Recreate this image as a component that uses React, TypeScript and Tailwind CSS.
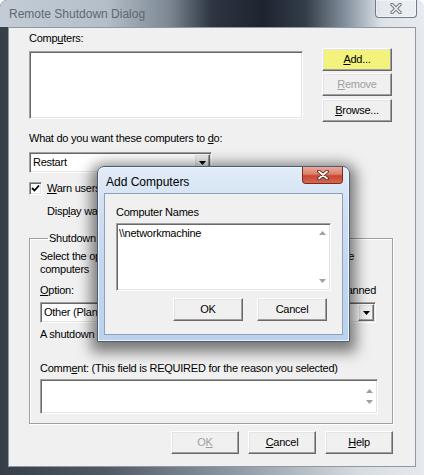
import React from "react";

const raised =
  "flex items-center justify-center border border-t-white border-l-white border-r-[#696969] border-b-[#696969] shadow-[inset_-1px_-1px_0_#a0a0a0,inset_1px_1px_0_#e3e3e3]";
const sunken =
  "border border-t-[#a0a0a0] border-l-[#a0a0a0] border-r-white border-b-white shadow-[inset_1px_1px_0_#696969,inset_-1px_-1px_0_#e3e3e3] bg-white";

function Arrow({ up, color = "#a0a0a0" }: { up?: boolean; color?: string }) {
  return (
    <svg width="7" height="4" viewBox="0 0 7 4">
      <path d={up ? "M0 4 L3.5 0 L7 4 Z" : "M0 0 L7 0 L3.5 4 Z"} fill={color} />
    </svg>
  );
}

function Combo({ value, className }: { value: string; className: string }) {
  return (
    <div className={`${sunken} flex items-stretch ${className}`}>
      <div className="flex flex-1 items-center pl-[3px] overflow-hidden whitespace-nowrap">{value}</div>
      <div className={`${raised} m-[1px] w-[16px] bg-[#f0f0f0]`}>
        <Arrow color="#000" />
      </div>
    </div>
  );
}

function Btn({
  children,
  className = "",
}: {
  children: React.ReactNode;
  className?: string;
}) {
  return <div className={`${raised} h-[23px] ${className}`}>{children}</div>;
}

function ScrollArrows({ className }: { className: string }) {
  return (
    <div className={`flex flex-col items-center justify-between ${className}`}>
      <Arrow up />
      <Arrow />
    </div>
  );
}

export default function App() {
  return (
    <div className="font-['Liberation_Sans',Arial,sans-serif] text-[11px] leading-[13px] tracking-[-0.25px] text-black">
      <div className="relative flex h-[475px] w-[424px] flex-col overflow-hidden rounded-t-[7px] bg-[linear-gradient(90deg,#363e47_0%,#515a64_25%,#8e98a3_55%,#d6dce2_85%,#e6eaee_100%)]">
        {/* title bar */}
        <div className="flex h-[27px] shrink-0 items-start justify-between bg-[linear-gradient(90deg,#c4cdd6_0%,#b4bec9_25%,#7c8793_40%,#2c3541_50%,#1c2430_62%,#333d49_72%,#8995a2_82%,#dde2e7_90%,#e8ecf0_100%)]">
          <div className="pl-[9px] pt-[7px] text-[12px] leading-[14px] tracking-normal text-[#5f6872]">
            Remote Shutdown Dialog
          </div>
          <div className="mr-[7px] flex h-[18px] w-[42px] items-center justify-center rounded-b-[4px] border border-t-0 border-[#727c88] bg-[#ffffff40] shadow-[inset_0_0_0_1px_#ffffff70]">
            <svg width="12" height="11" viewBox="0 0 12 11">
              <path d="M2 1.5 L10 9.5 M10 1.5 L2 9.5" stroke="#6a737e" strokeWidth="3.4" strokeLinecap="round" />
              <path d="M2 1.5 L10 9.5 M10 1.5 L2 9.5" stroke="#eef1f4" strokeWidth="1.6" strokeLinecap="round" />
            </svg>
          </div>
        </div>

        {/* client area */}
        <div className="mx-[8px] mb-[8px] flex flex-1 flex-col border border-[#8e99a5] bg-[#f0f0f0] pl-[20px]">
          <div className="mt-[4px]">
            Comp<span className="underline">u</span>ters:
          </div>
          <div className="mt-[3px] flex items-start">
            <div className={`${sunken} mt-[3px] h-[68px] w-[274px]`} />
            <div className="ml-[19px] flex w-[70px] flex-col">
              <Btn className="bg-[#f2f27c]">
                <span className="underline">A</span>dd...
              </Btn>
              <Btn className="mt-[2px] bg-[#f0f0f0] text-[#a0a0a0]">
                <span className="underline">R</span>emove
              </Btn>
              <Btn className="mt-[3px] bg-[#f0f0f0]">
                <span className="underline">B</span>rowse...
              </Btn>
            </div>
          </div>
          <div className="mt-[10px]">
            What do you want these computers to <span className="underline">d</span>o:
          </div>
          <Combo value="Restart" className="mt-[7px] h-[21px] w-[183px]" />
          <div className="mt-[9px] flex items-center">
            <div className={`${sunken} flex h-[13px] w-[13px] items-center justify-center`}>
              <svg width="9" height="9" viewBox="0 0 9 9">
                <path d="M1 4 L3.5 6.5 L8 1.5" stroke="#000" strokeWidth="1.8" fill="none" />
              </svg>
            </div>
            <div className="ml-[5px]">
              <span className="underline">W</span>arn users of the action
            </div>
          </div>
          <div className="ml-[18px] mt-[10px]">
            Disp<span className="underline">l</span>ay warning for 2 minutes
          </div>

          <fieldset className="mt-[14px] w-[364px] border border-[#a0a0a0] pb-[9px] pl-[10px] shadow-[1px_1px_0_#fff,inset_1px_1px_0_#fff]">
            <legend className="ml-[8px] px-[1px]">Shutdown Event Tracker</legend>
            <div className="mt-[5px]">
              Select the option that best describes why you want to shut down the
              <br />
              computers
            </div>
            <div className="mt-[8px] flex items-center justify-between pr-[16px]">
              <div>
                <span className="underline">O</span>ption:
              </div>
              <div className="flex items-center">
                <div className={`${sunken} h-[13px] w-[13px]`} />
                <div className="ml-[5px]">Planned</div>
              </div>
            </div>
            <Combo value="Other (Planned)" className="mt-[5px] h-[21px] w-[336px]" />
            <div className="mt-[5px]">A shutdown or restart for an unknown reason</div>
            <div className="mt-[21px]">
              Comm<span className="underline">e</span>nt: (This field is REQUIRED for the reason you selected)
            </div>
            <div className={`${sunken} mt-[4px] flex h-[35px] w-[338px] justify-end`}>
              <ScrollArrows className="w-[16px] py-[9px]" />
            </div>
          </fieldset>

          <div className="mt-[7px] flex w-[364px] justify-end gap-[9px]">
            <Btn className="w-[68px] bg-[#f0f0f0] text-[#a0a0a0]">
              O<span className="underline">K</span>
            </Btn>
            <Btn className="w-[68px] bg-[#f0f0f0]">
              <span className="underline">C</span>ancel
            </Btn>
            <Btn className="w-[68px] bg-[#f0f0f0]">
              <span className="underline">H</span>elp
            </Btn>
          </div>
        </div>

        {/* Add Computers dialog */}
        <div className="absolute left-[97px] top-[166px] flex h-[176px] w-[253px] flex-col rounded-t-[7px] border border-[#4a5d76] bg-[linear-gradient(180deg,#e3edf8_0%,#d2e1f2_20%,#c3d6ee_60%,#bcd1ec_100%)] shadow-[0_4px_14px_6px_rgba(0,0,0,0.5),inset_0_0_0_1px_#eef5fc]">
          <div className="flex h-[26px] shrink-0 items-start justify-between">
            <div className="pl-[8px] pt-[8px] text-[12px] leading-[14px] tracking-normal text-black">Add Computers</div>
            <div className="mr-[6px] flex h-[17px] w-[41px] items-center justify-center rounded-b-[4px] border border-t-0 border-[#7a2c20] bg-[linear-gradient(180deg,#eaa99b_0%,#dc8069_45%,#c8452f_55%,#d36a52_100%)]">
              <svg width="12" height="10" viewBox="0 0 12 10">
                <path d="M2 1.5 L10 8.5 M10 1.5 L2 8.5" stroke="#4a2420" strokeWidth="3.6" strokeLinecap="round" />
                <path d="M2 1.5 L10 8.5 M10 1.5 L2 8.5" stroke="#ffffff" strokeWidth="1.8" strokeLinecap="round" />
              </svg>
            </div>
          </div>
          <div className="mx-[6px] mb-[6px] flex flex-1 flex-col border border-[#8da1bb] bg-[#f0f0f0] pl-[11px]">
            <div className="mt-[12px]">Computer Names</div>
            <div className={`${sunken} mt-[4px] flex h-[68px] w-[215px]`}>
              <div className="flex-1 pl-[2px] pt-[3px]">\\networkmachine</div>
              <ScrollArrows className="w-[16px] py-[7px]" />
            </div>
            <div className="mt-[7px] flex w-[215px] justify-end gap-[14px] pr-[4px]">
              <Btn className="w-[70px] bg-[#f0f0f0]">OK</Btn>
              <Btn className="w-[70px] bg-[#f0f0f0]">Cancel</Btn>
            </div>
          </div>
        </div>
      </div>
    </div>
  );
}
